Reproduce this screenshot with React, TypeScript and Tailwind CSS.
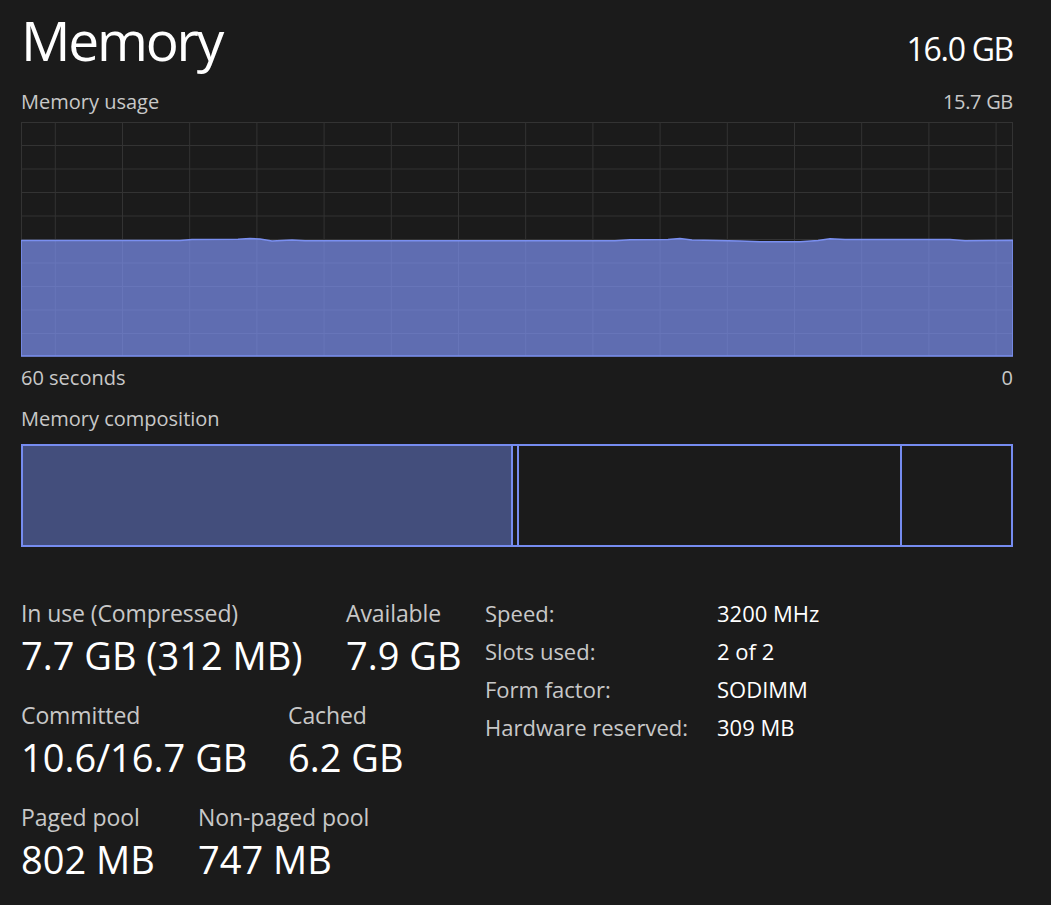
import type { ReactNode } from 'react'

const font = { fontFamily: '"Open Sans", "Noto Sans", sans-serif' }

// top edge of the usage area, in page pixels (x, y)
const usage: [number, number][] = [
  [21, 240.5], [180, 240.5], [192, 239.5], [238, 239.2], [250, 238.4], [260, 239], [272, 241],
  [282, 240.4], [292, 240], [305, 240.8], [615, 240.8], [630, 239.8], [668, 239.4], [680, 238.5],
  [692, 240], [740, 241], [760, 241.8], [800, 241.8], [818, 240.5], [830, 238.8], [845, 239.5],
  [950, 239.5], [965, 240.8], [1013, 240.3],
]

function UsageChart() {
  const w = 992
  const h = 235
  const rows = Array.from({ length: 9 }, (_, i) => ((i + 1) * h) / 10)
  const cols = Array.from({ length: 15 }, (_, i) => 34.3 + i * 67.2).filter((x) => x < w)
  const top = usage.map(([x, y]) => `${(x - 21).toFixed(1)},${(y - 122).toFixed(1)}`).join(' L')
  const area = `M0,${h - 1} L${top} L${w},${h - 1} Z`

  return (
    <svg width={w} height={h} viewBox={`0 0 ${w} ${h}`} className="block">
      <rect x={0.5} y={0.5} width={w - 1} height={h - 1} fill="none" stroke="#333333" />
      {rows.map((y) => (
        <line key={y} x1={0} x2={w} y1={y} y2={y} stroke="#333333" />
      ))}
      {cols.map((x) => (
        <line key={x} x1={x} x2={x} y1={0} y2={h} stroke="#333333" />
      ))}
      <path d={area} fill="#8298ff" fillOpacity={0.66} stroke="#7a8ff0" strokeWidth={1.5} />
    </svg>
  )
}

function Stat({ label, value, width }: { label: string; value: string; width: string }) {
  return (
    <div className={width}>
      <div className="text-[23px] leading-[22px] text-[#c8c8c8] tracking-[-0.1px] whitespace-nowrap">{label}</div>
      <div className="mt-[12px] text-[38px] leading-[38px] text-white whitespace-nowrap">{value}</div>
    </div>
  )
}

function Row({ children }: { children: ReactNode }) {
  return <div className="flex">{children}</div>
}

const specs = [
  ['Speed:', '3200 MHz'],
  ['Slots used:', '2 of 2'],
  ['Form factor:', 'SODIMM'],
  ['Hardware reserved:', '309 MB'],
]

export default function App() {
  return (
    <div className="h-[905px] w-[1051px] overflow-hidden bg-[#1b1b1b] pl-[21px]" style={font}>
      <div className="w-[992px]">
        <div className="flex items-baseline justify-between pt-[12px]">
          <div className="text-[55px] leading-[56px] tracking-[-2.2px] text-white">Memory</div>
          <div className="text-[32px] leading-[32px] tracking-[-1.3px] text-white">16.0 GB</div>
        </div>

        <div className="mt-[24px] flex justify-between text-[20px] leading-[20px] text-[#c8c8c8]">
          <span>Memory usage</span>
          <span className="tracking-[-0.3px]">15.7 GB</span>
        </div>

        <div className="mt-[10px]">
          <UsageChart />
        </div>

        <div className="mt-[11px] flex justify-between text-[20px] leading-[20px] text-[#c8c8c8]">
          <span>60 seconds</span>
          <span>0</span>
        </div>

        <div className="mt-[21px] text-[20px] leading-[20px] text-[#c8c8c8]">Memory composition</div>

        <div className="mt-[15px] flex h-[103px] border-2 border-[#768cf0]">
          <div className="w-[488px] bg-[#434e7c]" />
          <div className="w-[8px] border-x-2 border-[#768cf0]" />
          <div className="w-[383px] border-r-2 border-[#768cf0]" />
          <div className="flex-1" />
        </div>

        <div className="mt-[55px] flex">
          <div className="flex w-[464px] flex-col gap-[30px]">
            <Row>
              <Stat label="In use (Compressed)" value="7.7 GB (312 MB)" width="w-[325px]" />
              <Stat label="Available" value="7.9 GB" width="w-[120px]" />
            </Row>
            <Row>
              <Stat label="Committed" value="10.6/16.7 GB" width="w-[267px]" />
              <Stat label="Cached" value="6.2 GB" width="w-[120px]" />
            </Row>
            <Row>
              <Stat label="Paged pool" value="802 MB" width="w-[177px]" />
              <Stat label="Non-paged pool" value="747 MB" width="w-[180px]" />
            </Row>
          </div>

          <div className="flex flex-col gap-[16px] text-[22px] leading-[22px]">
            {specs.map(([k, v]) => (
              <div key={k} className="flex">
                <span className="w-[232px] text-[#c8c8c8]">{k}</span>
                <span className="text-white">{v}</span>
              </div>
            ))}
          </div>
        </div>
      </div>
    </div>
  )
}
